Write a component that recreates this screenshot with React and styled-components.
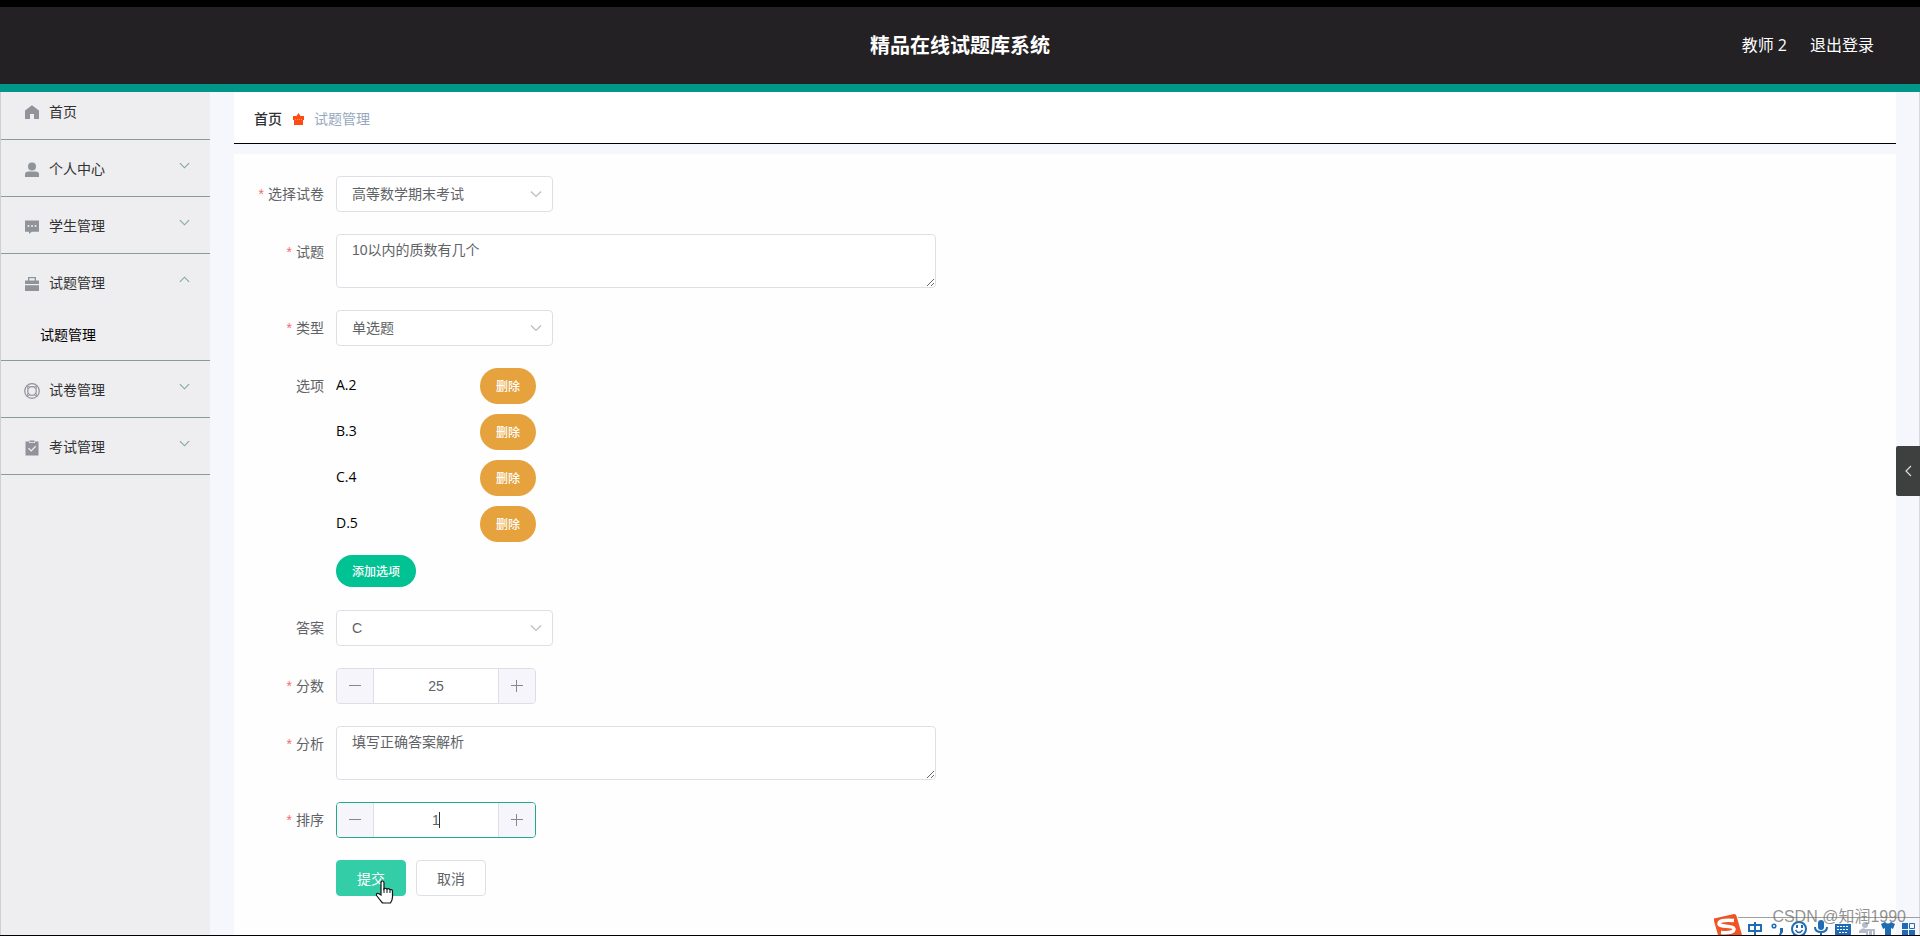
import { useState } from "react";
import styled, { createGlobalStyle, css } from "styled-components";

const GlobalStyle = createGlobalStyle`
  * {
    box-sizing: border-box;
  }

  body {
    margin: 0;
    background: #f6f7fc;
    font-family: "Open Sans", "Noto Sans CJK SC", sans-serif;
    font-size: 14px;
    color: #303133;
  }

  button,
  input,
  select,
  textarea {
    font-family: "Liberation Sans", "Noto Sans CJK SC", sans-serif;
    margin: 0;
  }
`;

const Page = styled.div`
  position: relative;
  display: flex;
  flex-direction: column;
  min-height: 100vh;
  border-top: 7px solid #000;
  border-bottom: 1px solid #000;
  overflow: hidden;
`;

const Header = styled.header`
  display: grid;
  grid-template-columns: 1fr auto 1fr;
  align-items: center;
  height: 85px;
  padding: 0 46px 3px;
  background: #232124;
  border-bottom: 8px solid #009688;
  color: #fff;
`;

const SystemName = styled.h1`
  grid-column: 2;
  margin: 0;
  font-size: 20px;
  font-weight: 700;
`;

const Account = styled.div`
  display: flex;
  justify-content: flex-end;
  gap: 23px;
  font-size: 16px;
`;

const LogoutLink = styled.a`
  color: #fff;
  text-decoration: none;
`;

const Body = styled.div`
  display: flex;
  flex: 1;
  border-right: 1px solid #d8d8dc;
`;

const Sidebar = styled.nav`
  flex: 0 0 210px;
  background: #eeedef;
  border-left: 1px solid #cfcfd2;
`;

const MenuGroup = styled.div`
  border-bottom: 1px solid #8a9c9a;
`;

const MenuItem = styled.button`
  display: flex;
  align-items: center;
  width: 100%;
  height: ${({ $first }) => ($first ? "47px" : "56px")};
  padding: ${({ $first }) => ($first ? "0 14px 10px 21px" : "0 14px 0 21px")};
  border: 0;
  background: none;
  color: #303133;
  font-size: 14px;
  cursor: pointer;

  svg:first-child {
    margin: 3px 7px 0 0;
  }
`;

const MenuText = styled.span`
  flex: 1;
  text-align: left;
`;

const ArrowSlot = styled.span`
  display: flex;
  padding-bottom: 6px;

  && svg {
    margin: 0 6px 0 0;
  }
`;

const SubItem = styled.a`
  display: block;
  padding-left: 39px;
  line-height: 50px;
  color: #000;
  text-decoration: none;
`;

const Main = styled.main`
  flex: 1;
  display: flex;
  flex-direction: column;
  gap: 10px;
  padding: 0 23px 0 24px;
`;

const Breadcrumb = styled.div`
  display: flex;
  align-items: center;
  gap: 10px;
  height: 52px;
  padding: 0 20px;
  background: #fff;
  border-bottom: 1px solid #000;

  svg {
    margin: 3px 0 0 1px;
  }
`;

const HomeLink = styled.a`
  color: #303133;
  font-weight: 500;
  text-decoration: none;
`;

const Current = styled.span`
  color: #97a8be;
`;

const Form = styled.form`
  flex: 1;
  display: flex;
  flex-direction: column;
  gap: 22px;
  padding: 22px 22px 39px;
  background: #fefefe;
`;

const Row = styled.div`
  display: flex;
  align-items: flex-start;
`;

const Label = styled.label`
  flex: 0 0 80px;
  padding-right: 12px;
  line-height: 35px;
  text-align: right;
  white-space: nowrap;
  color: #606266;

  ${({ $required }) =>
    $required &&
    css`
      &::before {
        content: "*";
        margin-right: 4px;
        color: #f56c6c;
        font-family: "Liberation Sans", sans-serif;
      }
    `}
`;

const fieldStyle = css`
  border: 1px solid #dcdfe6;
  border-radius: 4px;
  background: #fff;
  color: #606266;
  font-size: 14px;
  outline: none;
`;

const SelectBox = styled.div`
  position: relative;
  width: 217px;

  svg {
    position: absolute;
    top: 12px;
    right: 11px;
    pointer-events: none;
  }
`;

const Select = styled.select`
  ${fieldStyle}
  display: block;
  width: 100%;
  height: 36px;
  padding: 0 30px 0 15px;
  appearance: none;
`;

const TextArea = styled.textarea`
  ${fieldStyle}
  display: block;
  width: 600px;
  height: 54px;
  padding: 5px 15px;
  line-height: 21px;
  resize: vertical;
`;

const Options = styled.div`
  display: flex;
  flex-direction: column;
  gap: 10px;
`;

const Option = styled.div`
  display: flex;
  align-items: center;
  justify-content: space-between;
  width: 200px;
  height: 36px;
  line-height: 34px;
  color: #000;
`;

const OptionText = styled.span`
  align-self: flex-start;
`;

const PillButton = styled.button`
  height: ${({ $small }) => ($small ? "32px" : "36px")};
  padding: 0 16px 2px;
  border: 0;
  border-radius: 20px;
  background: ${({ $color }) => $color};
  color: #fff;
  font-size: 12px;
  font-weight: 500;
  cursor: pointer;
`;

const AddRow = styled.div`
  display: flex;
  align-items: flex-start;
  height: 36px;
  padding-top: 3px;
`;

const NumberBox = styled.div`
  position: relative;
  display: flex;
  width: 200px;
  height: 36px;
  border: 1px solid ${({ $active }) => ($active ? "#20a98b" : "#dcdfe6")};
  border-radius: 4px;
  overflow: hidden;
`;

const StepButton = styled.button`
  display: flex;
  align-items: center;
  justify-content: center;
  flex: 0 0 37px;
  padding: 0;
  border: 0 solid #dcdfe6;
  border-width: ${({ $right }) => ($right ? "0 0 0 1px" : "0 1px 0 0")};
  background: #f5f5fb;
  cursor: pointer;
`;

const NumberInput = styled.input`
  flex: 1;
  min-width: 0;
  border: 0;
  outline: none;
  background: #fff;
  color: #606266;
  font-size: 14px;
  text-align: center;
  caret-color: transparent;
`;

const Caret = styled.i`
  position: absolute;
  top: 9px;
  left: 102px;
  width: 1px;
  height: 16px;
  background: #303133;
`;

const Actions = styled.div`
  display: flex;
  gap: 10px;
  padding-left: 80px;
`;

const ActionButton = styled.button`
  position: relative;
  width: 70px;
  height: 36px;
  padding: 0;
  border: 1px solid ${({ $primary }) => ($primary ? "#33cda7" : "#dcdfe6")};
  border-radius: 4px;
  background: ${({ $primary }) => ($primary ? "#33cda7" : "#fff")};
  color: ${({ $primary }) => ($primary ? "#fff" : "#606266")};
  font-size: 14px;
  cursor: pointer;
`;

const Pointer = styled.svg`
  position: absolute;
  left: 38px;
  top: 19px;
`;

const Drawer = styled.button`
  position: absolute;
  top: 439px;
  right: 0;
  display: flex;
  align-items: center;
  justify-content: center;
  width: 24px;
  height: 50px;
  padding: 0;
  border: 0;
  border-radius: 2px 0 0 2px;
  background: #3d403e;
`;

const InputBar = styled.div`
  position: absolute;
  right: 0;
  bottom: 0;
  width: 206px;
  height: 21px;

  svg {
    display: block;
  }
`;

const Watermark = styled.span`
  position: absolute;
  right: 14px;
  bottom: 7px;
  color: rgba(110, 110, 110, 0.75);
  font-family: "Liberation Sans", "Noto Sans CJK SC", sans-serif;
  font-size: 16px;
  line-height: 22px;
`;

const menuIcons = {
  home: <path fill="#909399" d="M9 2.2 16 7.6V16h-5v-5H7v5H2V7.6z" />,
  user: (
    <g fill="#909399">
      <circle cx="9" cy="5.4" r="4" />
      <path d="M2 16v-2.5Q2 10.500 5.500 10.500h7q3.500 0 3.500 3V16z" />
    </g>
  ),
  chat: (
    <g>
      <path fill="#909399" d="M2 2.500h14v11.300H8.800L6 16v-2.200H2z" />
      <g fill="#eeedef">
        <circle cx="5.500" cy="8" r="1" />
        <circle cx="9" cy="8" r="1" />
        <circle cx="12.500" cy="8" r="1" />
      </g>
    </g>
  ),
  bag: (
    <g fill="#909399">
      <path d="M5 2h8v3.500h3v3.500H2V5.500h3zM6.300 3.300v2.200h5.400V3.300z" fillRule="evenodd" />
      <path d="M2 10.200h14V16H2z" />
    </g>
  ),
  help: (
    <g fill="none" stroke="#909399" strokeWidth="1.200">
      <circle cx="9" cy="9" r="7.300" />
      <circle cx="9" cy="9" r="4.300" />
      <path d="M3.800 3.800 7 5l-2 2zM14.200 3.800 11 5l2 2zM3.800 14.200 5 11l2 2zM14.200 14.200 13 11l-2 2z" strokeWidth=".8" />
    </g>
  ),
  claim: (
    <g>
      <path fill="#909399" d="M2.500 2.500H6V4h6V2.500h3.500V16.500h-13z" />
      <path fill="#909399" d="M6.500 1.500h5v1.700h-5z" />
      <path d="m5.500 9.300 2.700 2.600 4.500-4.700" fill="none" stroke="#eeedef" strokeWidth="1.300" />
    </g>
  ),
};

const menu = [
  { label: "首页", icon: "home" },
  { label: "个人中心", icon: "user", arrow: "down" },
  { label: "学生管理", icon: "chat", arrow: "down" },
  { label: "试题管理", icon: "bag", arrow: "up", children: ["试题管理"] },
  { label: "试卷管理", icon: "help", arrow: "down" },
  { label: "考试管理", icon: "claim", arrow: "down" },
];

function Chevron({ up, color = "#b8bcc4", size = 12 }) {
  return (
    <svg width={size} height={size} viewBox="0 0 12 12" fill="none" stroke={color} strokeWidth="1.200">
      <path d={up ? "M1 8.500 6 3.500l5 5" : "M1 3.500l5 5 5-5"} />
    </svg>
  );
}

function FormSelect({ id, options }) {
  return (
    <SelectBox>
      <Select id={id}>
        {options.map((option) => (
          <option key={option}>{option}</option>
        ))}
      </Select>
      <Chevron />
    </SelectBox>
  );
}

function NumberField({ id, initial, active }) {
  const [value, setValue] = useState(initial);

  return (
    <NumberBox $active={active}>
      <StepButton type="button" aria-label="减少" onClick={() => setValue(Number(value) - 1)}>
        <svg width="14" height="14" stroke="#85888e" fill="none">
          <path d="M1 6.500h12" />
        </svg>
      </StepButton>
      <NumberInput id={id} value={value} onChange={(e) => setValue(e.target.value)} />
      {active && <Caret />}
      <StepButton type="button" $right aria-label="增加" onClick={() => setValue(Number(value) + 1)}>
        <svg width="14" height="14" stroke="#85888e" fill="none">
          <path d="M1 6.500h12M6.500 1v12" />
        </svg>
      </StepButton>
    </NumberBox>
  );
}

function InputMethod() {
  return (
    <InputBar>
      <svg width="206" height="21" viewBox="0 1 206 21">
        <path d="M24 4.500h182" stroke="#a0a0a0" />
        <path d="M0 5.500 20 1q2 0 2.500 2L28 22H4L0 8z" fill="#ee5426" />
        <path d="M20 7.500C9 6.500 5 8 5 11s15 1.500 15 5-6 4-13 3.500" fill="none" stroke="#fff" strokeWidth="3.500" />
        <g fill="none" stroke="#1f6cb5" strokeWidth="2">
          <path d="M35 12h12v6H35zM41 9v13" />
          <circle cx="60" cy="13" r="1.800" strokeWidth="1.500" />
          <circle cx="85" cy="16" r="7" />
          <path d="M81.500 17q3.500 5 7 0" strokeWidth="1.500" />
          <path d="M101 14q0 5 6 5t6-5M107 19v3" />
        </g>
        <g fill="#1f6cb5">
          <path d="M66 15h3v4l-2 3h-2l1-3zM82 12h2v3h-2zM87 12h2v3h-2z" />
          <rect x="104" y="7" width="6" height="10" rx="3" />
          <path d="M121 11h16v11h-16z" />
          <path d="M167 11l4-2q3 3 6 0l4 2-2 5-2-1v7h-6v-7l-2 1zM188 10h6v6h-6zM188 17h6v5h-6zM195 17h6v5h-6z" />
        </g>
        <path d="M123 13.500h12M123 16.500h12M125 19.500h8" stroke="#fff" strokeDasharray="2 1" />
        <path d="M195.500 10.500h5v5h-5z" fill="none" stroke="#1f6cb5" />
        <g fill="#b4bccb">
          <circle cx="151" cy="12" r="3" />
          <path d="M145 18q4-5 8-1v3h-8z" />
          <path d="M152 16h9v6h-9z" />
        </g>
        <path d="M154.500 18v4M158.500 18v4" stroke="#fff" />
      </svg>
    </InputBar>
  );
}

export default function App() {
  const [options, setOptions] = useState(["A.2", "B.3", "C.4", "D.5"]);

  return (
    <Page>
      <GlobalStyle />
      <Header>
        <SystemName>精品在线试题库系统</SystemName>
        <Account>
          <span>教师 2</span>
          <LogoutLink href="#logout">退出登录</LogoutLink>
        </Account>
      </Header>

      <Body>
        <Sidebar>
          {menu.map((item, i) => (
            <MenuGroup key={item.label + i}>
              <MenuItem type="button" $first={i === 0}>
                <svg width="20" height="18" viewBox="-1 0 20 18">
                  {menuIcons[item.icon]}
                </svg>
                <MenuText>{item.label}</MenuText>
                {item.arrow && (
                  <ArrowSlot>
                    <Chevron up={item.arrow === "up"} color="#7fa79c" size={11} />
                  </ArrowSlot>
                )}
              </MenuItem>
              {item.children?.map((child) => (
                <SubItem key={child} href="#questions">
                  {child}
                </SubItem>
              ))}
            </MenuGroup>
          ))}
        </Sidebar>

        <Main>
          <Breadcrumb>
            <HomeLink href="#home">首页</HomeLink>
            <svg width="11" height="12" viewBox="0 0 11 12">
              <path d="M5.500 0 7.500 3H11v4h-1v5H1V7H0V3h3.500z" fill="#ff4a12" />
              <path d="M2 6.500h7" stroke="#ff9a6a" strokeDasharray="1 1" />
            </svg>
            <Current>试题管理</Current>
          </Breadcrumb>

          <Form onSubmit={(e) => e.preventDefault()}>
            <Row>
              <Label $required htmlFor="paper">选择试卷</Label>
              <FormSelect id="paper" options={["高等数学期末考试"]} />
            </Row>
            <Row>
              <Label $required htmlFor="question">试题</Label>
              <TextArea id="question" defaultValue="10以内的质数有几个" />
            </Row>
            <Row>
              <Label $required htmlFor="type">类型</Label>
              <FormSelect id="type" options={["单选题"]} />
            </Row>
            <Row>
              <Label as="span">选项</Label>
              <Options>
                {options.map((option) => (
                  <Option key={option}>
                    <OptionText>{option}</OptionText>
                    <PillButton
                      type="button"
                      $color="#e6a23c"
                      onClick={() => setOptions(options.filter((o) => o !== option))}
                    >
                      删除
                    </PillButton>
                  </Option>
                ))}
                <AddRow>
                  <PillButton type="button" $small $color="#00c292">
                    添加选项
                  </PillButton>
                </AddRow>
              </Options>
            </Row>
            <Row>
              <Label htmlFor="answer">答案</Label>
              <FormSelect id="answer" options={["C"]} />
            </Row>
            <Row>
              <Label $required htmlFor="score">分数</Label>
              <NumberField id="score" initial="25" />
            </Row>
            <Row>
              <Label $required htmlFor="analysis">分析</Label>
              <TextArea id="analysis" defaultValue="填写正确答案解析" />
            </Row>
            <Row>
              <Label $required htmlFor="sort">排序</Label>
              <NumberField id="sort" initial="1" active />
            </Row>
            <Actions>
              <ActionButton type="submit" $primary>
                提交
                <Pointer width="20" height="25" viewBox="0 0 20 25">
                  <path
                    d="M6 15V3q0-2 1.500-2T9 3v6q1-1.500 3 0 1.500-1 3 .6 2.500-.6 2.500 2V17q0 3-2 6H7.500Q5 20 1.500 15.500 1 13 3.500 13.500z"
                    fill="#fff"
                    stroke="#111"
                    strokeWidth="1.200"
                  />
                  <path d="M9 8v5M12 9v4M15 10v3" stroke="#111" />
                </Pointer>
              </ActionButton>
              <ActionButton type="button">取消</ActionButton>
            </Actions>
          </Form>
        </Main>
      </Body>

      <Drawer type="button" aria-label="展开">
        <svg width="8" height="12" fill="none" stroke="#dcdcdc" strokeWidth="1.200">
          <path d="M7 1 2 6l5 5" />
        </svg>
      </Drawer>
      <InputMethod />
      <Watermark>CSDN @知润1990</Watermark>
    </Page>
  );
}
